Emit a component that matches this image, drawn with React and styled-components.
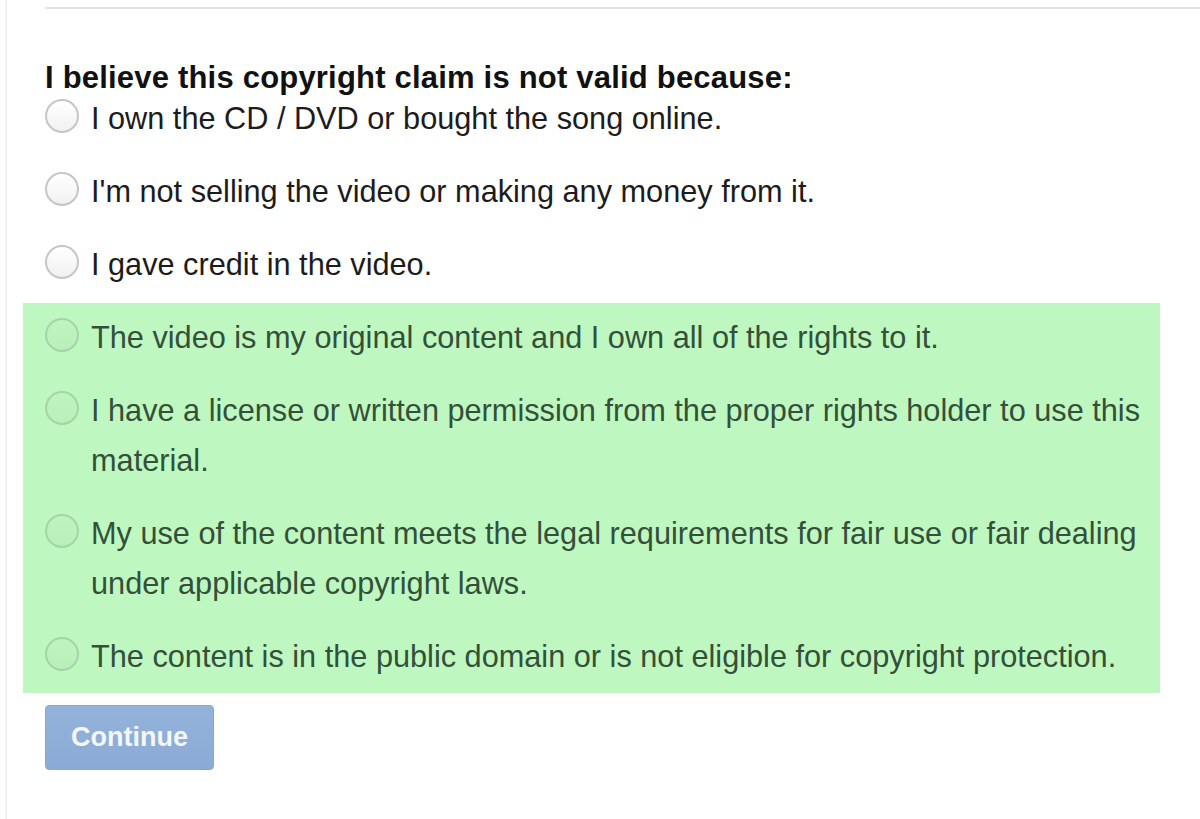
import styled, { createGlobalStyle } from "styled-components";

const GlobalStyle = createGlobalStyle`
  html, body {
    margin: 0;
    padding: 0;
    background: #ffffff;
  }
  body {
    font-family: "Liberation Sans", Arial, sans-serif;
  }
`;

const Page = styled.div`
  margin-left: 5px;
  min-height: 819px;
  border-left: 2px solid #f1f1f1;
  padding-left: 38px;
  padding-top: 7px;
  box-sizing: border-box;
`;

const Divider = styled.div`
  height: 2px;
  background: #e4e4e4;
`;

const Heading = styled.h2`
  margin: 52px 0 0;
  font-size: 31px;
  letter-spacing: 0.2px;
  line-height: 33px;
  font-weight: bold;
  color: #111111;
`;

const OptionList = styled.div`
  display: flex;
  flex-direction: column;
  gap: 23px;
`;

const Highlight = styled.div`
  display: flex;
  flex-direction: column;
  gap: 23px;
  background: #bef8c0;
  margin: -10px 0 0 -22px;
  padding: 10px 8px 11px 22px;
  width: 1137px;
  box-sizing: border-box;
`;

const Option = styled.label`
  display: flex;
  align-items: flex-start;
  gap: 12px;
  font-size: 30.7px;
  line-height: 50px;
  color: ${(p) => (p.$muted ? "#34503a" : "#1c1c1c")};
  cursor: pointer;
`;

const Radio = styled.span`
  flex: none;
  width: 34px;
  height: 34px;
  margin-top: 5px;
  border-radius: 50%;
  box-sizing: border-box;
  border: 2px solid ${(p) => (p.$muted ? "#a6d3a8" : "#c6c6c6")};
  background: ${(p) =>
    p.$muted
      ? "linear-gradient(#bdf4bf, #b8efba)"
      : "linear-gradient(#ffffff, #f1f1f1)"};
`;

const Button = styled.button`
  margin-top: 12px;
  height: 65px;
  padding: 0 25px;
  font-family: "Liberation Sans", Arial, sans-serif;
  font-size: 27px;
  font-weight: bold;
  color: #f4f7fb;
  background: linear-gradient(#94b3db, #8aabd6);
  border: 1px solid #87a7d2;
  border-radius: 4px;
  cursor: default;
`;

const plain = [
  "I own the CD / DVD or bought the song online.",
  "I'm not selling the video or making any money from it.",
  "I gave credit in the video.",
];

const valid = [
  "The video is my original content and I own all of the rights to it.",
  "I have a license or written permission from the proper rights holder to use this material.",
  "My use of the content meets the legal requirements for fair use or fair dealing under applicable copyright laws.",
  "The content is in the public domain or is not eligible for copyright protection.",
];

export default function App() {
  return (
    <>
      <GlobalStyle />
      <Page>
        <Divider />
        <Heading>I believe this copyright claim is not valid because:</Heading>
        <OptionList>
          {plain.map((t) => (
            <Option key={t}>
              <Radio />
              <span>{t}</span>
            </Option>
          ))}
          <Highlight>
            {valid.map((t) => (
              <Option key={t} $muted>
                <Radio $muted />
                <span>{t}</span>
              </Option>
            ))}
          </Highlight>
        </OptionList>
        <Button>Continue</Button>
      </Page>
    </>
  );
}
